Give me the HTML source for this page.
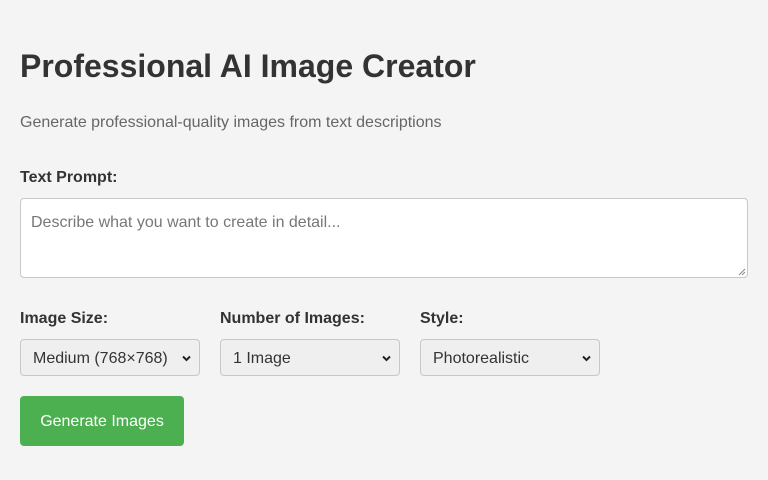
<!DOCTYPE html>
<html><head><style>
body{margin:0;background:#f4f4f4;font-family:"Liberation Sans",sans-serif;color:#333;width:768px;height:480px;overflow:hidden;position:relative}
.a{position:absolute;white-space:nowrap}
h1{margin:0;font-size:32px;font-weight:bold;color:#333}
.lbl{font-weight:bold;font-size:16px;color:#333}
.ta{position:absolute;left:20px;top:198px;width:726px;height:78px;background:#fff;border:1px solid #c8c8c8;border-radius:4px}
.sel{position:absolute;top:339px;width:178px;height:35px;background:#efefef;border:1px solid #c8c8c8;border-radius:4px;font-size:16px;line-height:37px;box-sizing:content-box}
.sel span{position:absolute;left:12px}
.sel svg{position:absolute;right:8px;top:15px}
.btn{position:absolute;left:20px;top:396px;width:164px;height:50px;background:#4caf50;border-radius:4px;color:#fff;font-size:16px;line-height:51px;text-align:center}
</style></head><body>
<h1 class="a" style="left:20px;top:48px">Professional AI Image Creator</h1>
<div class="a" style="left:20px;top:114px;font-size:16px;color:#666">Generate professional-quality images from text descriptions</div>
<div class="a lbl" style="left:20px;top:169px">Text Prompt:</div>
<div class="ta"><div class="a" style="left:10px;top:15px;font-size:16px;color:#777">Describe what you want to create in detail...</div>
<svg class="a" style="right:1px;bottom:1px" width="8" height="8"><path d="M7 1L1 7M7 4L4 7" stroke="#888" stroke-width="1"/></svg></div>
<div class="a lbl" style="left:20px;top:310px">Image Size:</div>
<div class="a lbl" style="left:220px;top:310px">Number of Images:</div>
<div class="a lbl" style="left:420px;top:310px">Style:</div>
<div class="sel" style="left:20px"><span>Medium (768×768)</span><svg width="9" height="7"><path d="M1 1.5L4.5 5L8 1.5" stroke="#222" stroke-width="2" fill="none"/></svg></div>
<div class="sel" style="left:220px"><span>1 Image</span><svg width="9" height="7"><path d="M1 1.5L4.5 5L8 1.5" stroke="#222" stroke-width="2" fill="none"/></svg></div>
<div class="sel" style="left:420px"><span>Photorealistic</span><svg width="9" height="7"><path d="M1 1.5L4.5 5L8 1.5" stroke="#222" stroke-width="2" fill="none"/></svg></div>
<div class="btn">Generate Images</div>
</body></html>
